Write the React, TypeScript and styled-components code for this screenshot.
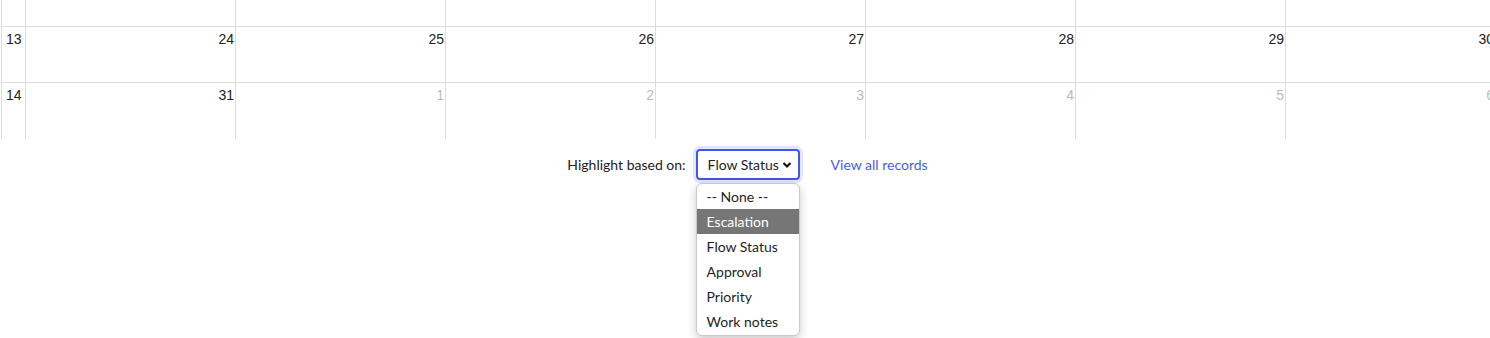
import React from "react";
import styled, { createGlobalStyle } from "styled-components";

const GlobalStyle = createGlobalStyle`
  html, body {
    margin: 0;
    padding: 0;
    background: #ffffff;
    overflow: hidden;
  }
  body {
    width: 1490px;
    height: 338px;
  }
`;

const Page = styled.div`
  width: 1490px;
  height: 338px;
  overflow: hidden;
  font-family: "Liberation Sans", Arial, sans-serif;
`;

const Calendar = styled.div`
  margin-left: 1px;
  width: 1600px;
  display: flex;
  flex-direction: column;
`;

const Week = styled.div<{ $height: number; $first?: boolean }>`
  box-sizing: border-box;
  display: grid;
  grid-template-columns: 24px repeat(7, 210px);
  height: ${(p) => p.$height}px;
  border-top: ${(p) => (p.$first ? "none" : "1px solid #dddddd")};
`;

const Cell = styled.div<{ $muted?: boolean; $week?: boolean }>`
  border-left: 1px solid #dddddd;
  padding: 4px ${(p) => (p.$week ? "0" : "1px")} 0 ${(p) => (p.$week ? "4px" : "0")};
  text-align: ${(p) => (p.$week ? "left" : "right")};
  font-size: 14px;
  line-height: 16px;
  color: ${(p) => (p.$muted ? "#bbbbbb" : "#222222")};
`;

const Controls = styled.div`
  display: flex;
  align-items: center;
  justify-content: center;
  margin-top: 10px;
  padding-left: 5px;
  font-family: Lato, "Open Sans", sans-serif;
  font-size: 14px;
  color: #222222;
`;

const Label = styled.span`
  margin-right: 10px;
`;

const SelectWrap = styled.div`
  position: relative;
  margin-right: 31px;
`;

const SelectBox = styled.div`
  box-sizing: border-box;
  width: 104px;
  height: 31px;
  border: 2px solid #4357e4;
  border-radius: 4px;
  box-shadow: 0 0 0 3px rgba(67, 87, 228, 0.14);
  display: flex;
  align-items: center;
  justify-content: space-between;
  padding: 0 6px 0 10px;
  color: #1e1e1e;
  svg {
    display: block;
  }
`;

const Menu = styled.ul`
  position: absolute;
  top: 34px;
  left: 0;
  margin: 0;
  padding: 0 0 1px;
  list-style: none;
  box-sizing: border-box;
  width: 104px;
  background: #ffffff;
  border: 1px solid #c9c9c9;
  border-radius: 6px;
  box-shadow: 0 3px 10px rgba(0, 0, 0, 0.22);
  overflow: hidden;
`;

const Option = styled.li<{ $active?: boolean }>`
  height: 25px;
  line-height: 25px;
  padding-left: 10px;
  background: ${(p) => (p.$active ? "#767676" : "transparent")};
  color: ${(p) => (p.$active ? "#ffffff" : "#1e1e1e")};
  white-space: nowrap;
`;

const Link = styled.a`
  color: #4a5de6;
  text-decoration: none;
`;

const weeks: { week: string; days: { n: number; muted?: boolean }[] }[] = [
  { week: "13", days: [24, 25, 26, 27, 28, 29, 30].map((n) => ({ n })) },
  {
    week: "14",
    days: [{ n: 31 }, ...[1, 2, 3, 4, 5, 6].map((n) => ({ n, muted: true }))],
  },
];

const options = ["-- None --", "Escalation", "Flow Status", "Approval", "Priority", "Work notes"];

export default function App() {
  return (
    <Page>
      <GlobalStyle />
      <Calendar>
        <Week $height={26} $first>
          {Array.from({ length: 8 }).map((_, i) => (
            <Cell key={i} $week={i === 0} />
          ))}
        </Week>
        {weeks.map((w, wi) => (
          <Week key={w.week} $height={wi === weeks.length - 1 ? 57 : 56}>
            <Cell $week>{w.week}</Cell>
            {w.days.map((d) => (
              <Cell key={d.n} $muted={d.muted}>
                {d.n}
              </Cell>
            ))}
          </Week>
        ))}
      </Calendar>
      <Controls>
        <Label>Highlight based on:</Label>
        <SelectWrap>
          <SelectBox>
            <span>Flow Status</span>
            <svg width="10" height="8" viewBox="0 0 10 8">
              <path d="M1.5 2 L5 5.5 L8.5 2" fill="none" stroke="#111" strokeWidth="2.2" />
            </svg>
          </SelectBox>
          <Menu>
            {options.map((o) => (
              <Option key={o} $active={o === "Escalation"}>
                {o}
              </Option>
            ))}
          </Menu>
        </SelectWrap>
        <Link href="#">View all records</Link>
      </Controls>
    </Page>
  );
}
